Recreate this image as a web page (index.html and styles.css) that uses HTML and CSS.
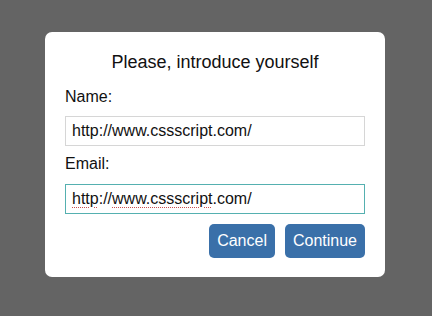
FILE: index.html
```html
<!DOCTYPE html>
<html>
<head>
<meta charset="utf-8">
<link rel="stylesheet" href="styles.css">
</head>
<body>
<div class="dialog">
  <div class="title">Please, introduce yourself</div>
  <label class="label label-first">Name:</label>
  <div class="field">http://www.cssscript.com/</div>
  <label class="label">Email:</label>
  <div class="field field-focus"><span class="spell">http</span>://<span class="spell">www.cssscript</span>.com/</div>
  <div class="actions">
    <button class="btn">Cancel</button>
    <button class="btn">Continue</button>
  </div>
</div>
</body>
</html>
```
FILE: styles.css
```css
html, body {
  margin: 0;
  padding: 0;
  background: #646464;
  height: 100%;
}
body {
  padding-top: 32px;
  box-sizing: border-box;
  font-family: "Liberation Sans", Arial, sans-serif;
}
.dialog {
  margin-left: 45px;
  width: 340px;
  box-sizing: border-box;
  background: #fff;
  border-radius: 7px;
  padding: 18px 20px 19px 20px;
  display: flex;
  flex-direction: column;
}
.title {
  font-size: 18px;
  line-height: 24px;
  text-align: center;
  color: #111;
}
.label {
  display: block;
  font-size: 16px;
  line-height: 20px;
  color: #111;
  margin-top: 8px;
}
.label-first {
  margin-top: 13px;
}
.field {
  margin-top: 9px;
  height: 30px;
  box-sizing: border-box;
  border: 1px solid #d6d6d6;
  padding: 0 6px;
  font-size: 16px;
  line-height: 28px;
  color: #111;
  white-space: nowrap;
}
.field-focus {
  margin-top: 10px;
  border-color: #55b0b0;
}
.spell {
  text-decoration: underline dotted #c85050;
  text-decoration-thickness: 1px;
  text-underline-offset: 3px;
}
.actions {
  display: flex;
  justify-content: flex-end;
  gap: 10px;
  margin-top: 10px;
}
.btn {
  font-family: "Liberation Sans", Arial, sans-serif;
  font-size: 16px;
  height: 34px;
  padding: 0 8px;
  border: none;
  border-radius: 5px;
  background: #3a70a9;
  color: #fff;
}
```
